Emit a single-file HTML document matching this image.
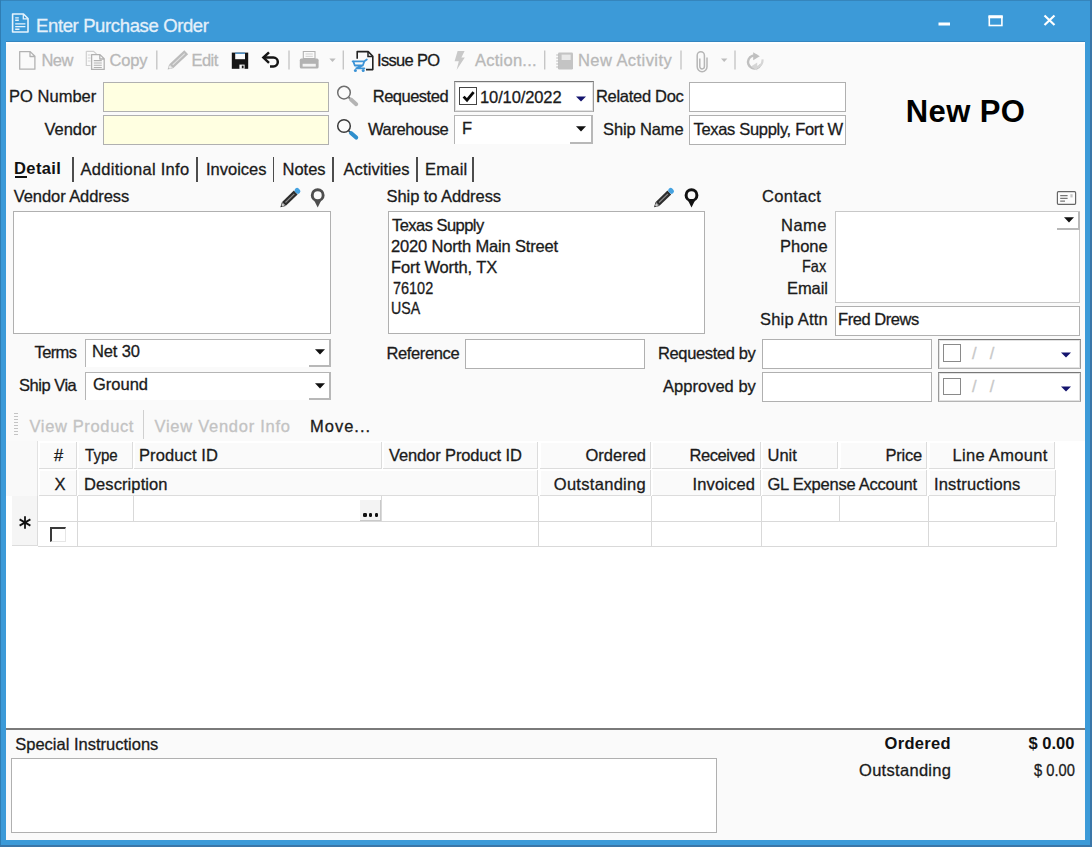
<!DOCTYPE html><html><head><meta charset="utf-8"><title>Enter Purchase Order</title><style>html,body{margin:0;padding:0}body{width:1092px;height:847px;overflow:hidden;position:relative;font-family:'Liberation Sans', sans-serif;background:#3c9ad8}span{-webkit-text-stroke:0.3px currentColor}</style></head><body>
<div style="position:absolute;left:0px;top:0px;width:1092px;height:847px;box-sizing:border-box;background:#3c9ad8;"></div>
<div style="position:absolute;left:0px;top:0px;width:1092px;height:1px;box-sizing:border-box;background:#3585bc;"></div>
<div style="position:absolute;left:0px;top:0px;width:1px;height:847px;box-sizing:border-box;background:#2f7db3;"></div>
<div style="position:absolute;left:1090px;top:0px;width:2px;height:847px;box-sizing:border-box;background:#3a76a8;"></div>
<div style="position:absolute;left:0px;top:845px;width:1092px;height:2px;box-sizing:border-box;background:#3a76a8;"></div>
<div style="position:absolute;left:6px;top:41px;width:1078.5px;height:1px;box-sizing:border-box;background:#3486c0;"></div>
<div style="position:absolute;left:6px;top:42px;width:1078.5px;height:797.5px;box-sizing:border-box;background:#fafafa;border-top:2px solid #fff;"></div>
<div style="position:absolute;left:6px;top:441px;width:1078.5px;height:287px;box-sizing:border-box;background:#fff;"></div>
<div style="position:absolute;left:6px;top:441px;width:32px;height:55px;box-sizing:border-box;background:#f9f9f9;border-right:1px solid #e2e2e2;"></div>
<div style="position:absolute;left:6px;top:727.5px;width:1078.5px;height:2.5px;box-sizing:border-box;background:#7a7a7a;"></div>
<svg style="position:absolute;left:930px;top:8px" width="140" height="26" viewBox="930 8 140 26"><rect x="938.5" y="22.5" width="11.5" height="3" fill="#fff"/><rect x="989.3" y="16.5" width="12.6" height="9" fill="none" stroke="#fff" stroke-width="1.6"/><rect x="988.5" y="15.3" width="14.2" height="3" fill="#fff"/><path d="M1044.5 15.5 L1054.5 25 M1054.5 15.5 L1044.5 25" stroke="#fff" stroke-width="2.2" fill="none"/></svg>
<div style="position:absolute;left:102.5px;top:81.5px;width:226.0px;height:30.0px;box-sizing:border-box;background:#ffffe1;border:1px solid #b0b0b0;"></div>
<div style="position:absolute;left:102.5px;top:115px;width:226.0px;height:30px;box-sizing:border-box;background:#ffffe1;border:1px solid #b0b0b0;"></div>
<div style="position:absolute;left:454px;top:81.3px;width:140px;height:30.400000000000006px;box-sizing:border-box;background:#fff;border:1px solid #999;border-top-color:#787878;border-bottom-color:#b4b4b4;box-shadow:inset 0 0 0 1px #e2e2e2;"></div>
<div style="position:absolute;left:454px;top:115px;width:139px;height:29px;box-sizing:border-box;background:#fff;border-left:1px solid #b5b5b5;border-top:1px solid #b5b5b5;"></div>
<div style="position:absolute;left:688.5px;top:81.5px;width:157.0px;height:30.0px;box-sizing:border-box;background:#fff;border:1px solid #b0b0b0;"></div>
<div style="position:absolute;left:688.5px;top:115px;width:157.0px;height:30px;box-sizing:border-box;background:#fff;border:1px solid #b0b0b0;"></div>
<div style="position:absolute;left:570px;top:116px;width:23px;height:28px;box-sizing:border-box;background:#fff;border-right:2px solid #b8b8b8;border-bottom:2px solid #b8b8b8;"></div>
<svg style="position:absolute;left:575.2px;top:124.6px" width="12" height="8" viewBox="0 0 12 8"><path d="M1 1.2 L11 1.2 L6 6.6 Z" fill="#111"/></svg>
<svg style="position:absolute;left:574.5px;top:94.5px" width="12" height="8" viewBox="0 0 12 8"><path d="M1 1.5 L11 1.5 L6 6.5 Z" fill="#14146e"/></svg>
<div style="position:absolute;left:459.2px;top:87.2px;width:17.600000000000023px;height:17.599999999999994px;box-sizing:border-box;background:#fff;border:1.2px solid #444;"></div>
<svg style="position:absolute;left:459.5px;top:87.5px" width="17" height="17" viewBox="0 0 17 17"><path d="M3.6 8.6 L7 12.2 L13.6 4.2" stroke="#0a0a0a" stroke-width="2.8" fill="none"/></svg>
<div style="position:absolute;left:72.3px;top:157px;width:1.4000000000000057px;height:25px;box-sizing:border-box;background:#4c4c4c;"></div>
<div style="position:absolute;left:196.3px;top:157px;width:1.3999999999999773px;height:25px;box-sizing:border-box;background:#4c4c4c;"></div>
<div style="position:absolute;left:272.8px;top:157px;width:1.3999999999999773px;height:25px;box-sizing:border-box;background:#4c4c4c;"></div>
<div style="position:absolute;left:332.3px;top:157px;width:1.3999999999999773px;height:25px;box-sizing:border-box;background:#4c4c4c;"></div>
<div style="position:absolute;left:416.3px;top:157px;width:1.3999999999999773px;height:25px;box-sizing:border-box;background:#4c4c4c;"></div>
<div style="position:absolute;left:472.3px;top:157px;width:1.3999999999999773px;height:25px;box-sizing:border-box;background:#4c4c4c;"></div>
<div style="position:absolute;left:15px;top:176px;width:11.5px;height:1.5999999999999943px;box-sizing:border-box;background:#111;"></div>
<div style="position:absolute;left:13px;top:211px;width:318px;height:122.5px;box-sizing:border-box;background:#fff;border:1px solid #b0b0b0;"></div>
<div style="position:absolute;left:387.5px;top:211px;width:317.5px;height:122.5px;box-sizing:border-box;background:#fff;border:1px solid #b0b0b0;"></div>
<div style="position:absolute;left:834.5px;top:210.5px;width:245.5px;height:92.0px;box-sizing:border-box;background:#fff;border:1px solid #c8c8c8;"></div>
<div style="position:absolute;left:1057px;top:212px;width:23px;height:18px;box-sizing:border-box;background:#fff;border-right:2px solid #b8b8b8;border-bottom:2px solid #b8b8b8;"></div>
<svg style="position:absolute;left:1062.6px;top:216.3px" width="12" height="8" viewBox="0 0 12 8"><path d="M1 1.2 L11 1.2 L6 6.6 Z" fill="#111"/></svg>
<div style="position:absolute;left:834.5px;top:305.5px;width:245.5px;height:30.0px;box-sizing:border-box;background:#fff;border:1px solid #b0b0b0;"></div>
<div style="position:absolute;left:84.5px;top:338.5px;width:246.5px;height:28.5px;box-sizing:border-box;background:#fff;border-left:1px solid #b5b5b5;border-top:1px solid #b5b5b5;"></div>
<div style="position:absolute;left:309px;top:340px;width:22px;height:27px;box-sizing:border-box;background:#fff;border-right:2px solid #b8b8b8;border-bottom:2px solid #b8b8b8;"></div>
<svg style="position:absolute;left:313.7px;top:348.2px" width="12" height="8" viewBox="0 0 12 8"><path d="M1 1.2 L11 1.2 L6 6.6 Z" fill="#111"/></svg>
<div style="position:absolute;left:84.5px;top:371.5px;width:246.5px;height:28.5px;box-sizing:border-box;background:#fff;border-left:1px solid #b5b5b5;border-top:1px solid #b5b5b5;"></div>
<div style="position:absolute;left:309px;top:373px;width:22px;height:27px;box-sizing:border-box;background:#fff;border-right:2px solid #b8b8b8;border-bottom:2px solid #b8b8b8;"></div>
<svg style="position:absolute;left:313.7px;top:381.6px" width="12" height="8" viewBox="0 0 12 8"><path d="M1 1.2 L11 1.2 L6 6.6 Z" fill="#111"/></svg>
<div style="position:absolute;left:465px;top:339px;width:180px;height:29.5px;box-sizing:border-box;background:#fff;border:1px solid #b0b0b0;"></div>
<div style="position:absolute;left:762px;top:339px;width:169.5px;height:29.5px;box-sizing:border-box;background:#fff;border:1px solid #b0b0b0;"></div>
<div style="position:absolute;left:762px;top:372px;width:169.5px;height:29.5px;box-sizing:border-box;background:#fff;border:1px solid #b0b0b0;"></div>
<div style="position:absolute;left:937.5px;top:338.5px;width:143.0px;height:30.0px;box-sizing:border-box;background:#fff;border:1px solid #999;border-top-color:#787878;border-bottom-color:#b4b4b4;box-shadow:inset 0 0 0 1px #e2e2e2;"></div>
<div style="position:absolute;left:937.5px;top:372px;width:143.0px;height:29.5px;box-sizing:border-box;background:#fff;border:1px solid #999;border-top-color:#787878;border-bottom-color:#b4b4b4;box-shadow:inset 0 0 0 1px #e2e2e2;"></div>
<div style="position:absolute;left:943px;top:344px;width:18px;height:17.5px;box-sizing:border-box;background:#fff;border:1px solid #8a8a8a;"></div>
<div style="position:absolute;left:943px;top:377.5px;width:18px;height:17.5px;box-sizing:border-box;background:#fff;border:1px solid #8a8a8a;"></div>
<svg style="position:absolute;left:1060px;top:351.3px" width="12" height="8" viewBox="0 0 12 8"><path d="M1 1.5 L11 1.5 L6 6.5 Z" fill="#14146e"/></svg>
<svg style="position:absolute;left:1060px;top:384.5px" width="12" height="8" viewBox="0 0 12 8"><path d="M1 1.5 L11 1.5 L6 6.5 Z" fill="#14146e"/></svg>
<div style="position:absolute;left:14px;top:413px;width:3.5px;height:23px;box-sizing:border-box;background:repeating-linear-gradient(#c4c4c4 0 1.5px, transparent 1.5px 3px);"></div>
<div style="position:absolute;left:142.5px;top:409.5px;width:1.5px;height:29.5px;box-sizing:border-box;background:#d0d0d0;"></div>
<div style="position:absolute;left:38.5px;top:441.5px;width:38.0px;height:27.0px;box-sizing:border-box;background:#fafafa;border-right:1px solid #dcdcdc;border-bottom:1px solid #dcdcdc;box-shadow:inset 1px 1px 0 #fff;"></div>
<div style="position:absolute;left:78px;top:441.5px;width:54.5px;height:27.0px;box-sizing:border-box;background:#fafafa;border-right:1px solid #dcdcdc;border-bottom:1px solid #dcdcdc;box-shadow:inset 1px 1px 0 #fff;"></div>
<div style="position:absolute;left:134px;top:441.5px;width:247.5px;height:27.0px;box-sizing:border-box;background:#fafafa;border-right:1px solid #dcdcdc;border-bottom:1px solid #dcdcdc;box-shadow:inset 1px 1px 0 #fff;"></div>
<div style="position:absolute;left:383px;top:441.5px;width:155px;height:27.0px;box-sizing:border-box;background:#fafafa;border-right:1px solid #dcdcdc;border-bottom:1px solid #dcdcdc;box-shadow:inset 1px 1px 0 #fff;"></div>
<div style="position:absolute;left:539.5px;top:441.5px;width:111.0px;height:27.0px;box-sizing:border-box;background:#fafafa;border-right:1px solid #dcdcdc;border-bottom:1px solid #dcdcdc;box-shadow:inset 1px 1px 0 #fff;"></div>
<div style="position:absolute;left:652px;top:441.5px;width:108.5px;height:27.0px;box-sizing:border-box;background:#fafafa;border-right:1px solid #dcdcdc;border-bottom:1px solid #dcdcdc;box-shadow:inset 1px 1px 0 #fff;"></div>
<div style="position:absolute;left:762px;top:441.5px;width:76px;height:27.0px;box-sizing:border-box;background:#fafafa;border-right:1px solid #dcdcdc;border-bottom:1px solid #dcdcdc;box-shadow:inset 1px 1px 0 #fff;"></div>
<div style="position:absolute;left:840px;top:441.5px;width:87px;height:27.0px;box-sizing:border-box;background:#fafafa;border-right:1px solid #dcdcdc;border-bottom:1px solid #dcdcdc;box-shadow:inset 1px 1px 0 #fff;"></div>
<div style="position:absolute;left:929px;top:441.5px;width:125.5px;height:27.0px;box-sizing:border-box;background:#fafafa;border-right:1px solid #dcdcdc;border-bottom:1px solid #dcdcdc;box-shadow:inset 1px 1px 0 #fff;"></div>
<div style="position:absolute;left:38.5px;top:470px;width:38.0px;height:25.5px;box-sizing:border-box;background:#fafafa;border-right:1px solid #dcdcdc;border-bottom:1px solid #dcdcdc;box-shadow:inset 1px 1px 0 #fff;"></div>
<div style="position:absolute;left:78px;top:470px;width:460px;height:25.5px;box-sizing:border-box;background:#fafafa;border-right:1px solid #dcdcdc;border-bottom:1px solid #dcdcdc;box-shadow:inset 1px 1px 0 #fff;"></div>
<div style="position:absolute;left:539.5px;top:470px;width:111.0px;height:25.5px;box-sizing:border-box;background:#fafafa;border-right:1px solid #dcdcdc;border-bottom:1px solid #dcdcdc;box-shadow:inset 1px 1px 0 #fff;"></div>
<div style="position:absolute;left:652px;top:470px;width:108.5px;height:25.5px;box-sizing:border-box;background:#fafafa;border-right:1px solid #dcdcdc;border-bottom:1px solid #dcdcdc;box-shadow:inset 1px 1px 0 #fff;"></div>
<div style="position:absolute;left:762px;top:470px;width:165px;height:25.5px;box-sizing:border-box;background:#fafafa;border-right:1px solid #dcdcdc;border-bottom:1px solid #dcdcdc;box-shadow:inset 1px 1px 0 #fff;"></div>
<div style="position:absolute;left:929px;top:470px;width:127px;height:25.5px;box-sizing:border-box;background:#fafafa;border-right:1px solid #dcdcdc;border-bottom:1px solid #dcdcdc;box-shadow:inset 1px 1px 0 #fff;"></div>
<div style="position:absolute;left:12px;top:496px;width:26px;height:50px;box-sizing:border-box;background:#f5f5f5;border-right:1px solid #dcdcdc;border-bottom:1px solid #dcdcdc;"></div>
<div style="position:absolute;left:38px;top:521px;width:1017px;height:1px;box-sizing:border-box;background:#d9d9d9;"></div>
<div style="position:absolute;left:38px;top:546.2px;width:1018.5px;height:1.0px;box-sizing:border-box;background:#d9d9d9;"></div>
<div style="position:absolute;left:77.0px;top:496px;width:1.0px;height:25.5px;box-sizing:border-box;background:#d9d9d9;"></div>
<div style="position:absolute;left:133.0px;top:496px;width:1.0px;height:25.5px;box-sizing:border-box;background:#d9d9d9;"></div>
<div style="position:absolute;left:381.0px;top:496px;width:1.0px;height:25.5px;box-sizing:border-box;background:#d9d9d9;"></div>
<div style="position:absolute;left:538.0px;top:496px;width:1.0px;height:25.5px;box-sizing:border-box;background:#d9d9d9;"></div>
<div style="position:absolute;left:650.5px;top:496px;width:1.0px;height:25.5px;box-sizing:border-box;background:#d9d9d9;"></div>
<div style="position:absolute;left:760.5px;top:496px;width:1.0px;height:25.5px;box-sizing:border-box;background:#d9d9d9;"></div>
<div style="position:absolute;left:839.0px;top:496px;width:1.0px;height:25.5px;box-sizing:border-box;background:#d9d9d9;"></div>
<div style="position:absolute;left:927.5px;top:496px;width:1.0px;height:25.5px;box-sizing:border-box;background:#d9d9d9;"></div>
<div style="position:absolute;left:1054.0px;top:496px;width:1.0px;height:25.5px;box-sizing:border-box;background:#d9d9d9;"></div>
<div style="position:absolute;left:77.0px;top:521.5px;width:1.0px;height:25.5px;box-sizing:border-box;background:#d9d9d9;"></div>
<div style="position:absolute;left:538.0px;top:521.5px;width:1.0px;height:25.5px;box-sizing:border-box;background:#d9d9d9;"></div>
<div style="position:absolute;left:650.5px;top:521.5px;width:1.0px;height:25.5px;box-sizing:border-box;background:#d9d9d9;"></div>
<div style="position:absolute;left:760.5px;top:521.5px;width:1.0px;height:25.5px;box-sizing:border-box;background:#d9d9d9;"></div>
<div style="position:absolute;left:927.5px;top:521.5px;width:1.0px;height:25.5px;box-sizing:border-box;background:#d9d9d9;"></div>
<div style="position:absolute;left:1055.5px;top:521.5px;width:1.0px;height:25.5px;box-sizing:border-box;background:#d9d9d9;"></div>
<div style="position:absolute;left:360px;top:500px;width:20.5px;height:20.5px;box-sizing:border-box;background:#f3f3f3;border-right:1px solid #c9c9c9;border-bottom:1px solid #c9c9c9;"></div>
<div style="position:absolute;left:363.3px;top:513px;width:3.3999999999999773px;height:3.6000000000000227px;box-sizing:border-box;background:#111;border-radius:1.2px;"></div>
<div style="position:absolute;left:368.90000000000003px;top:513px;width:3.3999999999999773px;height:3.6000000000000227px;box-sizing:border-box;background:#111;border-radius:1.2px;"></div>
<div style="position:absolute;left:374.5px;top:513px;width:3.3999999999999773px;height:3.6000000000000227px;box-sizing:border-box;background:#111;border-radius:1.2px;"></div>
<div style="position:absolute;left:50.2px;top:527px;width:15.799999999999997px;height:15.299999999999955px;box-sizing:border-box;background:#fff;border-left:2px solid #3a3a3a;border-top:2px solid #3a3a3a;border-right:1px solid #e6e6e6;border-bottom:1px solid #e6e6e6;"></div>
<svg style="position:absolute;left:18px;top:515px" width="14" height="15" viewBox="0 0 14 15"><path d="M7 1.2 V13.8 M1.6 4.4 L12.4 10.6 M12.4 4.4 L1.6 10.6" stroke="#111" stroke-width="1.8" fill="none"/></svg>
<div style="position:absolute;left:11px;top:757.5px;width:705.5px;height:75.0px;box-sizing:border-box;background:#fff;border:1px solid #b0b0b0;"></div>
<span style="position:absolute;left:36.00px;top:16.94px;font-size:18.5px;font-weight:400;color:#e4f0fa;letter-spacing:-0.368px;line-height:18.5px;white-space:pre;">Enter Purchase Order</span>
<span style="position:absolute;left:41.50px;top:52.03px;font-size:16.5px;font-weight:400;color:#b8b8b8;letter-spacing:-0.600px;line-height:16.5px;white-space:pre;">New</span>
<span style="position:absolute;left:109.50px;top:52.03px;font-size:16.5px;font-weight:400;color:#b8b8b8;letter-spacing:-0.200px;line-height:16.5px;white-space:pre;">Copy</span>
<span style="position:absolute;left:191.50px;top:52.03px;font-size:16.5px;font-weight:400;color:#b8b8b8;letter-spacing:-0.533px;line-height:16.5px;white-space:pre;">Edit</span>
<span style="position:absolute;left:377.00px;top:52.03px;font-size:16.5px;font-weight:400;color:#1b1b1b;letter-spacing:-0.686px;line-height:16.5px;white-space:pre;">Issue PO</span>
<span style="position:absolute;left:475.00px;top:52.03px;font-size:16.5px;font-weight:400;color:#b8b8b8;letter-spacing:0.250px;line-height:16.5px;white-space:pre;">Action...</span>
<span style="position:absolute;left:578.00px;top:52.03px;font-size:16.5px;font-weight:400;color:#b8b8b8;letter-spacing:0.436px;line-height:16.5px;white-space:pre;">New Activity</span>
<span style="position:absolute;left:9.00px;top:88.33px;font-size:16.5px;font-weight:400;color:#1b1b1b;letter-spacing:0.025px;line-height:16.5px;white-space:pre;">PO Number</span>
<span style="position:absolute;left:44.50px;top:121.23px;font-size:16.5px;font-weight:400;color:#1b1b1b;letter-spacing:-0.040px;line-height:16.5px;white-space:pre;">Vendor</span>
<span style="position:absolute;left:372.75px;top:88.33px;font-size:16.5px;font-weight:400;color:#1b1b1b;letter-spacing:-0.500px;line-height:16.5px;white-space:pre;">Requested</span>
<span style="position:absolute;left:368.00px;top:121.23px;font-size:16.5px;font-weight:400;color:#1b1b1b;letter-spacing:-0.375px;line-height:16.5px;white-space:pre;">Warehouse</span>
<span style="position:absolute;left:480.00px;top:89.03px;font-size:16.5px;font-weight:400;color:#1b1b1b;letter-spacing:-0.111px;line-height:16.5px;white-space:pre;">10/10/2022</span>
<span style="position:absolute;left:462.00px;top:119.53px;font-size:16.5px;font-weight:400;color:#1b1b1b;line-height:16.5px;white-space:pre;">F</span>
<span style="position:absolute;left:596.00px;top:88.33px;font-size:16.5px;font-weight:400;color:#1b1b1b;letter-spacing:-0.300px;line-height:16.5px;white-space:pre;">Related Doc</span>
<span style="position:absolute;left:603.00px;top:121.23px;font-size:16.5px;font-weight:400;color:#1b1b1b;letter-spacing:-0.125px;line-height:16.5px;white-space:pre;">Ship Name</span>
<span style="position:absolute;left:693.50px;top:121.23px;font-size:16.5px;font-weight:400;color:#1b1b1b;letter-spacing:-0.316px;line-height:16.5px;white-space:pre;">Texas Supply, Fort W</span>
<span style="position:absolute;left:905.75px;top:95.51px;font-size:31px;font-weight:700;color:#000;letter-spacing:0.400px;line-height:31px;white-space:pre;-webkit-text-stroke:0;">New PO</span>
<span style="position:absolute;left:14.00px;top:159.53px;font-size:16.5px;font-weight:700;color:#111;letter-spacing:0.400px;line-height:16.5px;white-space:pre;-webkit-text-stroke:0;">Detail</span>
<span style="position:absolute;left:80.50px;top:161.43px;font-size:16.5px;font-weight:400;color:#1b1b1b;letter-spacing:0.286px;line-height:16.5px;white-space:pre;">Additional Info</span>
<span style="position:absolute;left:206.00px;top:161.43px;font-size:16.5px;font-weight:400;color:#1b1b1b;line-height:16.5px;white-space:pre;">Invoices</span>
<span style="position:absolute;left:282.50px;top:161.43px;font-size:16.5px;font-weight:400;color:#1b1b1b;line-height:16.5px;white-space:pre;">Notes</span>
<span style="position:absolute;left:343.50px;top:161.43px;font-size:16.5px;font-weight:400;color:#1b1b1b;letter-spacing:0.111px;line-height:16.5px;white-space:pre;">Activities</span>
<span style="position:absolute;left:425.00px;top:161.43px;font-size:16.5px;font-weight:400;color:#1b1b1b;letter-spacing:0.250px;line-height:16.5px;white-space:pre;">Email</span>
<span style="position:absolute;left:13.75px;top:188.03px;font-size:16.5px;font-weight:400;color:#1b1b1b;letter-spacing:-0.077px;line-height:16.5px;white-space:pre;">Vendor Address</span>
<span style="position:absolute;left:386.50px;top:188.03px;font-size:16.5px;font-weight:400;color:#1b1b1b;letter-spacing:-0.071px;line-height:16.5px;white-space:pre;">Ship to Address</span>
<span style="position:absolute;left:762.00px;top:188.03px;font-size:16.5px;font-weight:400;color:#1b1b1b;letter-spacing:0.333px;line-height:16.5px;white-space:pre;">Contact</span>
<span style="position:absolute;left:392.00px;top:217.03px;font-size:16.5px;font-weight:400;color:#1b1b1b;letter-spacing:-0.545px;line-height:16.5px;white-space:pre;">Texas Supply</span>
<span style="position:absolute;left:391.00px;top:238.03px;font-size:16.5px;font-weight:400;color:#1b1b1b;letter-spacing:-0.162px;line-height:16.5px;white-space:pre;">2020 North Main Street</span>
<span style="position:absolute;left:391.00px;top:259.03px;font-size:16.5px;font-weight:400;color:#1b1b1b;letter-spacing:-0.108px;line-height:16.5px;white-space:pre;">Fort Worth, TX</span>
<span style="position:absolute;left:392.50px;top:280.03px;font-size:16.5px;font-weight:400;color:#1b1b1b;line-height:16.5px;white-space:pre;transform:scaleX(0.8759);transform-origin:0 0;">76102</span>
<span style="position:absolute;left:391.00px;top:300.03px;font-size:16.5px;font-weight:400;color:#1b1b1b;line-height:16.5px;white-space:pre;transform:scaleX(0.8583);transform-origin:0 0;">USA</span>
<span style="position:absolute;left:781.00px;top:217.03px;font-size:16.5px;font-weight:400;color:#1b1b1b;letter-spacing:0.467px;line-height:16.5px;white-space:pre;">Name</span>
<span style="position:absolute;left:780.00px;top:238.03px;font-size:16.5px;font-weight:400;color:#1b1b1b;line-height:16.5px;white-space:pre;">Phone</span>
<span style="position:absolute;left:802.00px;top:258.03px;font-size:16.5px;font-weight:400;color:#1b1b1b;line-height:16.5px;white-space:pre;transform:scaleX(0.8776);transform-origin:0 0;">Fax</span>
<span style="position:absolute;left:787.00px;top:280.03px;font-size:16.5px;font-weight:400;color:#1b1b1b;letter-spacing:-0.100px;line-height:16.5px;white-space:pre;">Email</span>
<span style="position:absolute;left:760.00px;top:311.43px;font-size:16.5px;font-weight:400;color:#1b1b1b;letter-spacing:0.200px;line-height:16.5px;white-space:pre;">Ship Attn</span>
<span style="position:absolute;left:838.00px;top:311.03px;font-size:16.5px;font-weight:400;color:#1b1b1b;letter-spacing:-0.444px;line-height:16.5px;white-space:pre;">Fred Drews</span>
<span style="position:absolute;left:34.50px;top:344.03px;font-size:16.5px;font-weight:400;color:#1b1b1b;letter-spacing:-0.600px;line-height:16.5px;white-space:pre;">Terms</span>
<span style="position:absolute;left:92.00px;top:343.43px;font-size:16.5px;font-weight:400;color:#1b1b1b;letter-spacing:-0.120px;line-height:16.5px;white-space:pre;">Net 30</span>
<span style="position:absolute;left:19.00px;top:377.33px;font-size:16.5px;font-weight:400;color:#1b1b1b;letter-spacing:-0.486px;line-height:16.5px;white-space:pre;">Ship Via</span>
<span style="position:absolute;left:93.00px;top:375.53px;font-size:16.5px;font-weight:400;color:#1b1b1b;line-height:16.5px;white-space:pre;">Ground</span>
<span style="position:absolute;left:386.50px;top:345.03px;font-size:16.5px;font-weight:400;color:#1b1b1b;letter-spacing:-0.375px;line-height:16.5px;white-space:pre;">Reference</span>
<span style="position:absolute;left:658.00px;top:345.03px;font-size:16.5px;font-weight:400;color:#1b1b1b;letter-spacing:-0.364px;line-height:16.5px;white-space:pre;">Requested by</span>
<span style="position:absolute;left:663.00px;top:377.73px;font-size:16.5px;font-weight:400;color:#1b1b1b;letter-spacing:0.020px;line-height:16.5px;white-space:pre;">Approved by</span>
<span style="position:absolute;left:972.00px;top:345.03px;font-size:16.5px;font-weight:400;color:#c8c8c8;letter-spacing:1.333px;line-height:16.5px;white-space:pre;">/  /</span>
<span style="position:absolute;left:972.00px;top:377.53px;font-size:16.5px;font-weight:400;color:#c8c8c8;letter-spacing:1.333px;line-height:16.5px;white-space:pre;">/  /</span>
<span style="position:absolute;left:29.50px;top:418.43px;font-size:16.5px;font-weight:400;color:#c3c3c3;letter-spacing:0.636px;line-height:16.5px;white-space:pre;">View Product</span>
<span style="position:absolute;left:154.50px;top:418.43px;font-size:16.5px;font-weight:400;color:#c3c3c3;letter-spacing:0.733px;line-height:16.5px;white-space:pre;">View Vendor Info</span>
<span style="position:absolute;left:310.00px;top:418.43px;font-size:16.5px;font-weight:400;color:#1b1b1b;letter-spacing:1.000px;line-height:16.5px;white-space:pre;">Move...</span>
<span style="position:absolute;left:54.00px;top:447.03px;font-size:16.5px;font-weight:400;color:#1b1b1b;line-height:16.5px;white-space:pre;">#</span>
<span style="position:absolute;left:85.00px;top:447.03px;font-size:16.5px;font-weight:400;color:#1b1b1b;line-height:16.5px;white-space:pre;transform:scaleX(0.9147);transform-origin:0 0;">Type</span>
<span style="position:absolute;left:139.00px;top:447.03px;font-size:16.5px;font-weight:400;color:#1b1b1b;letter-spacing:0.111px;line-height:16.5px;white-space:pre;">Product ID</span>
<span style="position:absolute;left:389.00px;top:447.03px;font-size:16.5px;font-weight:400;color:#1b1b1b;letter-spacing:-0.125px;line-height:16.5px;white-space:pre;">Vendor Product ID</span>
<span style="position:absolute;left:585.50px;top:447.03px;font-size:16.5px;font-weight:400;color:#1b1b1b;line-height:16.5px;white-space:pre;">Ordered</span>
<span style="position:absolute;left:689.50px;top:447.03px;font-size:16.5px;font-weight:400;color:#1b1b1b;letter-spacing:-0.429px;line-height:16.5px;white-space:pre;">Received</span>
<span style="position:absolute;left:767.50px;top:447.03px;font-size:16.5px;font-weight:400;color:#1b1b1b;line-height:16.5px;white-space:pre;">Unit</span>
<span style="position:absolute;left:885.50px;top:447.03px;font-size:16.5px;font-weight:400;color:#1b1b1b;letter-spacing:-0.250px;line-height:16.5px;white-space:pre;">Price</span>
<span style="position:absolute;left:952.50px;top:447.03px;font-size:16.5px;font-weight:400;color:#1b1b1b;letter-spacing:0.300px;line-height:16.5px;white-space:pre;">Line Amount</span>
<span style="position:absolute;left:54.50px;top:475.53px;font-size:16.5px;font-weight:400;color:#1b1b1b;line-height:16.5px;white-space:pre;">X</span>
<span style="position:absolute;left:84.00px;top:475.53px;font-size:16.5px;font-weight:400;color:#1b1b1b;letter-spacing:0.100px;line-height:16.5px;white-space:pre;">Description</span>
<span style="position:absolute;left:553.75px;top:475.53px;font-size:16.5px;font-weight:400;color:#1b1b1b;letter-spacing:0.300px;line-height:16.5px;white-space:pre;">Outstanding</span>
<span style="position:absolute;left:692.50px;top:475.53px;font-size:16.5px;font-weight:400;color:#1b1b1b;letter-spacing:0.143px;line-height:16.5px;white-space:pre;">Invoiced</span>
<span style="position:absolute;left:767.50px;top:475.53px;font-size:16.5px;font-weight:400;color:#1b1b1b;letter-spacing:-0.235px;line-height:16.5px;white-space:pre;">GL Expense Account</span>
<span style="position:absolute;left:934.00px;top:475.53px;font-size:16.5px;font-weight:400;color:#1b1b1b;letter-spacing:0.182px;line-height:16.5px;white-space:pre;">Instructions</span>
<span style="position:absolute;left:15.25px;top:735.53px;font-size:16.5px;font-weight:400;color:#1b1b1b;line-height:16.5px;white-space:pre;">Special Instructions</span>
<span style="position:absolute;left:884.50px;top:734.78px;font-size:16.5px;font-weight:700;color:#111;letter-spacing:0.333px;line-height:16.5px;white-space:pre;-webkit-text-stroke:0;">Ordered</span>
<span style="position:absolute;left:1028.50px;top:734.78px;font-size:16.5px;font-weight:700;color:#111;line-height:16.5px;white-space:pre;-webkit-text-stroke:0;">$ 0.00</span>
<span style="position:absolute;left:859.00px;top:761.53px;font-size:16.5px;font-weight:400;color:#1b1b1b;letter-spacing:0.300px;line-height:16.5px;white-space:pre;">Outstanding</span>
<span style="position:absolute;left:1034.00px;top:761.53px;font-size:16.5px;font-weight:400;color:#1b1b1b;line-height:16.5px;white-space:pre;transform:scaleX(0.8916);transform-origin:0 0;">$ 0.00</span>
<svg style="position:absolute;left:0;top:0" width="1092" height="847" viewBox="0 0 1092 847" fill="none"><path d="M12.6 14 H23.5 L28 18.5 V32 H12.6 Z" stroke="#e6f4fd" stroke-width="1.6" stroke-linejoin="round"/><path d="M23.3 14.2 V18.8 H27.8" stroke="#e6f4fd" stroke-width="1.3"/><path d="M15.2 17.9 H18.8 M15.2 20.2 H18.8 M15.2 23.9 H25.4 M15.2 26.6 H25.4 M15.2 29.2 H19.5" stroke="#e6f4fd" stroke-width="1.4"/><path d="M19.7 51.6 H30.2 L34.9 56.3 V69.2 H19.7 Z M30 51.8 V56.5 H34.7" stroke="#b2b2b2" stroke-width="1.3" stroke-linejoin="round"/><path d="M86.3 51.3 H93.5 L96.5 54 M86.3 51.3 V65.5 H90.5" stroke="#cfcfcf" stroke-width="1.2"/><path d="M87.8 55 H90.5 M87.8 58 H90.5 M87.8 61 H90.5" stroke="#d4d4d4" stroke-width="1"/><path d="M91.6 54.6 H100 L104.2 58.8 V69.4 H91.6 Z M99.8 54.8 V59 H104" stroke="#b2b2b2" stroke-width="1.3" stroke-linejoin="round" fill="#fafafa"/><path d="M93.8 60.6 H101.8 M93.8 63 H101.8 M93.8 65.3 H101.8 M93.8 67.5 H101.8" stroke="#b2b2b2" stroke-width="1.1"/><rect x="156.10000000000002" y="50.5" width="1.4" height="19" fill="#c6c6c6"/><rect x="288.3" y="50.5" width="1.4" height="19" fill="#c6c6c6"/><rect x="342.6" y="50.5" width="1.4" height="19" fill="#c6c6c6"/><rect x="544.0" y="50.5" width="1.4" height="19" fill="#c6c6c6"/><rect x="680.3" y="50.5" width="1.4" height="19" fill="#c6c6c6"/><rect x="734.3" y="50.5" width="1.4" height="19" fill="#c6c6c6"/><g transform="translate(167.6,69.6) rotate(-43.09)"><path d="M0 0 L4.8 -2.8 L4.8 2.8 Z" fill="#bcbcbc"/><path d="M2.2 -0.9 L4.6 -1.6 L4.6 1.6 L2.2 0.9Z" fill="#fff" opacity="0.75"/><rect x="5" y="-2.8" width="20.47" height="5.6" fill="#bcbcbc"/><rect x="7" y="-0.6" width="16.47" height="1.2" fill="#e2e2e2"/></g><rect x="231.8" y="52.6" width="16.4" height="16.2" fill="#151515"/><rect x="235.2" y="53.6" width="9.8" height="5.6" fill="#fbfbfb"/><rect x="235.2" y="52.6" width="9.8" height="1.2" fill="#4a98d8"/><rect x="239.4" y="64.6" width="5.2" height="4.3" fill="#fbfbfb"/><rect x="241.8" y="65.6" width="1.8" height="2.6" fill="#151515"/><path d="M269 52.4 L263.4 57.6 L269 62.8" stroke="#151515" stroke-width="2.5" stroke-linejoin="miter"/><path d="M264 57.6 H273.4 A4.4 4.4 0 0 1 273.4 66.4 H270" stroke="#151515" stroke-width="2.5"/><path d="M303.3 51.5 H315 V58.5 H303.3 Z" stroke="#b2b2b2" stroke-width="1.1" fill="#fafafa"/><path d="M305.5 54 H312.8 M305.5 56.3 H312.8" stroke="#cfcfcf" stroke-width="1"/><rect x="299.8" y="58.6" width="18.8" height="10" rx="1.6" fill="#b2b2b2"/><rect x="302.6" y="63.8" width="13.2" height="2.8" fill="#f3f3f3"/><path d="M329.3 58.6 H335.7 L332.5 62 Z" fill="#bdbdbd"/><path d="M721.0 58.6 H727.4000000000001 L724.2 62 Z" fill="#bdbdbd"/><path d="M357.2 58.8 V51.6 H368.2 L372.8 56.2 V69.6 H366" stroke="#222" stroke-width="1.6" stroke-linejoin="round"/><path d="M368 51.8 V56.4 H372.6" stroke="#222" stroke-width="1.5"/><path d="M352.6 61.3 H364.4 L366.8 59.5 M353.2 61.3 L354.8 65.5 H362.8 L364.4 61.3 M362.8 65.5 L356.2 68.4 H364.4" stroke="#3c93d6" stroke-width="1.8" stroke-linejoin="round" stroke-linecap="round"/><circle cx="355.4" cy="70.4" r="1.5" fill="#3c93d6"/><circle cx="363.2" cy="70.4" r="1.5" fill="#3c93d6"/><path d="M457.6 51 H464.6 L461.4 57.4 H464.8 L456.6 70 L458.8 61.2 H454.6 Z" fill="#c9c9c9"/><rect x="558" y="52.6" width="15" height="16.8" rx="1.2" fill="#c4c4c4"/><rect x="561.6" y="54.6" width="9" height="5.4" fill="#e9e9e9"/><path d="M556.2 55 H559 M556.2 58 H559 M556.2 61 H559 M556.2 64 H559 M556.2 67 H559" stroke="#bcbcbc" stroke-width="1.2"/><path d="M699.8 58.5 V66.6 A2.3 2.3 0 0 0 704.4 66.6 V55.4 A3.6 3.6 0 0 0 697.2 55.4 V66.8 A4.9 4.9 0 0 0 707 66.8 V57.5" stroke="#b6b6b6" stroke-width="1.5"/><path d="M757.4 56 A6.6 6.6 0 1 0 760.6 64.8" stroke="#c0c0c0" stroke-width="2.4"/><path d="M753.2 52.2 L759.8 56.2 L753.2 60.2 Z" fill="#c0c0c0"/><path d="M753 66.4 A6.6 6.6 0 0 0 762.4 59.4" stroke="#d6d6d6" stroke-width="2.2"/><path d="M757.2 62.6 L751 66.6 L757.2 70.4 Z" fill="#d6d6d6"/><circle cx="344" cy="92.6" r="6.3" stroke="#6e6e6e" stroke-width="1.5" fill="#fbfbfb"/><path d="M348.7 97.5 L350.2 98.8" stroke="#6e6e6e" stroke-width="1.8"/><path d="M351 99.6 L356.2 104.19999999999999" stroke="#b4b4b4" stroke-width="4" stroke-linecap="round"/><circle cx="344" cy="126" r="6.3" stroke="#3a3a3a" stroke-width="1.5" fill="#fbfbfb"/><path d="M348.7 130.9 L350.2 132.2" stroke="#3a3a3a" stroke-width="1.8"/><path d="M351 133 L356.2 137.6" stroke="#2f8fcd" stroke-width="4" stroke-linecap="round"/><g transform="translate(280.4,207.3) rotate(-43.91)"><path d="M0 0 L4.8 -2.7 L4.8 2.7 Z" fill="#2c2c2c"/><path d="M2.2 -0.9 L4.6 -1.6 L4.6 1.6 L2.2 0.9Z" fill="#fff" opacity="0.75"/><rect x="5" y="-2.7" width="16.30" height="5.4" fill="#2c2c2c"/><rect x="7" y="-0.6" width="12.30" height="1.2" fill="#8a8a8a"/><rect x="21.30" y="-3.0" width="4.8" height="6.0" rx="2.2" fill="#45a2e0"/></g><g transform="translate(654,207.3) rotate(-43.91)"><path d="M0 0 L4.8 -2.7 L4.8 2.7 Z" fill="#2c2c2c"/><path d="M2.2 -0.9 L4.6 -1.6 L4.6 1.6 L2.2 0.9Z" fill="#fff" opacity="0.75"/><rect x="5" y="-2.7" width="16.30" height="5.4" fill="#2c2c2c"/><rect x="7" y="-0.6" width="12.30" height="1.2" fill="#8a8a8a"/><rect x="21.30" y="-3.0" width="4.8" height="6.0" rx="2.2" fill="#45a2e0"/></g><circle cx="317.7" cy="195.2" r="5.45" stroke="#4e4e4e" stroke-width="2.9"/><path d="M314.20 200.60 L317.7 207.4 L321.20 200.60 Z" fill="#4e4e4e"/><circle cx="691.5" cy="195.2" r="5.4" stroke="#111" stroke-width="3.0"/><path d="M688.00 200.60 L691.5 207.4 L695.00 200.60 Z" fill="#111"/><rect x="1057.4" y="191.7" width="18.2" height="12.6" rx="1" stroke="#666" stroke-width="1.2" fill="#fcfcfc"/><path d="M1060.2 195.6 H1067.6 M1060.2 198.4 H1067.6 M1060.2 201.2 H1065" stroke="#777" stroke-width="1.2"/><rect x="1070.4" y="194.2" width="2.2" height="3.2" fill="#c4c4c4"/></svg>
</body></html>
